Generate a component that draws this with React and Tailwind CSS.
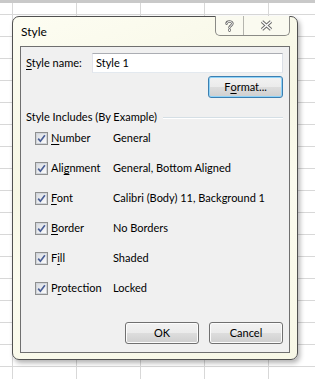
import React from "react";

const rows = [
  { pre: "", key: "N", post: "umber", value: "General" },
  { pre: "Ali", key: "g", post: "nment", value: "General, Bottom Aligned" },
  { pre: "", key: "F", post: "ont", value: "Calibri (Body) 11, Background 1" },
  { pre: "", key: "B", post: "order", value: "No Borders" },
  { pre: "F", key: "i", post: "ll", value: "Shaded" },
  { pre: "P", key: "r", post: "otection", value: "Locked" },
];

function CheckBox() {
  return (
    <span className="flex h-[13px] w-[13px] shrink-0 items-center justify-center border border-[#8e8f8f] bg-[#f4f4f4]">
      <span className="flex h-[11px] w-[11px] items-center justify-center border border-[#d0d4da] bg-[linear-gradient(135deg,#dadde2,#fbfbfb)]">
        <svg width="9" height="9" viewBox="0 0 9 9">
          <path d="M1.2 4.6 L3.4 7.2 L7.9 1.3" fill="none" stroke="#4a5f97" strokeWidth="1.7" />
        </svg>
      </span>
    </span>
  );
}

function Button({ children, focused }) {
  return (
    <button
      className={
        focused
          ? "flex h-[22px] w-[75px] items-center justify-center rounded-[3px] border border-[#3c7fb1] bg-[linear-gradient(to_bottom,#f2f2f2_0%,#ebebeb_50%,#dddddd_51%,#cfcfcf_100%)] shadow-[inset_0_0_0_1px_#8fd3f8] text-black"
          : "flex h-[22px] w-[74px] items-center justify-center rounded-[3px] border border-[#707070] bg-[linear-gradient(to_bottom,#f2f2f2_0%,#ebebeb_50%,#dddddd_51%,#cfcfcf_100%)] shadow-[inset_0_0_0_1px_#fcfcfc] text-black"
      }
    >
      {children}
    </button>
  );
}

export default function App() {
  return (
    <div className="h-[379px] w-[315px] overflow-hidden bg-white bg-[linear-gradient(to_right,#d8d8d8_1px,transparent_1px),linear-gradient(to_bottom,#d8d8d8_1px,transparent_1px)] bg-[size:64px_22px] bg-[position:12px_14px] font-['Lato',sans-serif] text-[11px] text-black">
      <div className="h-[3px] w-full bg-[#c9c9c9]" />
      <div className="ml-[12px] mt-[13px] flex h-[344px] w-[286px] flex-col rounded-[7px] border border-[#505050] bg-[linear-gradient(160deg,#fdfdf2_0%,#f6f6e4_40%,#fbfbee_60%,#f7f7e6_100%)] px-[7px] shadow-[2px_3px_5px_rgba(0,0,0,0.3)]">
        <div className="flex h-[29px] items-start justify-between">
          <span className="mt-[7px] pl-[1px] text-[12px] leading-[16px]">Style</span>
          <div className="-mt-px flex h-[20px] rounded-b-[5px] border border-t-0 border-[#8a8a86] bg-[#fafaf0]">
            <div className="flex w-[28px] items-center justify-center border-r border-[#b5b5ae]">
              <svg width="9" height="12" viewBox="0 0 9 12">
                <path d="M1.6 3.6 C1.6 0.8 7.4 0.8 7.4 3.6 C7.4 5.6 4.5 5.6 4.5 7.6 M4.5 9.6 L4.5 10.6" fill="none" stroke="#6a6a6a" strokeWidth="2.6" strokeLinecap="round" />
                <path d="M1.6 3.6 C1.6 0.8 7.4 0.8 7.4 3.6 C7.4 5.6 4.5 5.6 4.5 7.6 M4.5 9.6 L4.5 10.6" fill="none" stroke="#ffffff" strokeWidth="1" strokeLinecap="round" />
              </svg>
            </div>
            <div className="flex w-[45px] items-center justify-center">
              <svg width="13" height="11" viewBox="0 0 13 11">
                <path d="M2 1.5 L11 9.5 M11 1.5 L2 9.5" fill="none" stroke="#6a6a6a" strokeWidth="3.4" />
                <path d="M2 1.5 L11 9.5 M11 1.5 L2 9.5" fill="none" stroke="#ffffff" strokeWidth="1.4" />
              </svg>
            </div>
          </div>
        </div>

        <div className="flex h-[307px] flex-col border border-[#6f6f6f] bg-[#f0f0f0] pl-[5px] pr-[6px]">
          <div className="mt-[6px] flex h-[20px] items-center">
            <span className="w-[66px] shrink-0 whitespace-nowrap">
              <span className="underline underline-offset-2">S</span>tyle name:
            </span>
            <div className="flex h-[20px] flex-1 items-center border border-[#abadb3] border-b-[#e3e9ef] border-l-[#e2e3ea] border-r-[#dbdfe6] bg-white pl-[3px]">
              Style 1
            </div>
          </div>

          <div className="mt-[3px] flex justify-end">
            <Button focused>
              F<span className="underline underline-offset-2">o</span>rmat...
            </Button>
          </div>

          <div className="mt-[12px] flex h-[13px] items-center">
            <span className="whitespace-nowrap leading-[13px]">Style Includes (By Example)</span>
            <div className="ml-[6px] mt-[2px] flex-1 border-t border-b border-t-[#d5dfe5] border-b-white" />
          </div>

          <div className="flex flex-col">
            {rows.map((r) => (
              <div key={r.value} className="flex h-[30px] items-center whitespace-nowrap">
                <span className="ml-[9px] shrink-0">
                  <CheckBox />
                </span>
                <span className="ml-[3px] w-[62px] shrink-0">
                  {r.pre}
                  <span className="underline underline-offset-2">{r.key}</span>
                  {r.post}
                </span>
                <span>{r.value}</span>
              </div>
            ))}
          </div>

          <div className="mt-[19px] flex justify-end gap-[10px]">
            <Button>OK</Button>
            <Button>Cancel</Button>
          </div>
        </div>
      </div>
    </div>
  );
}
